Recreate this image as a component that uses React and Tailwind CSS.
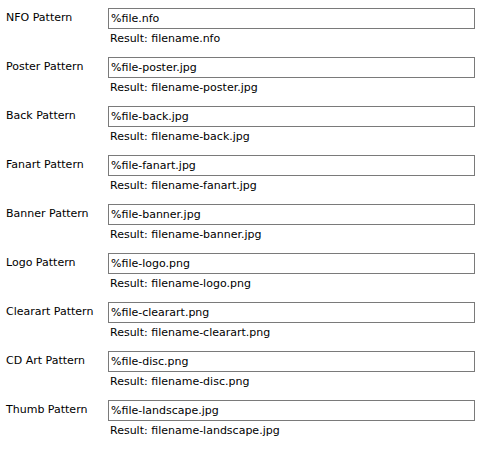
import React from 'react';

const rows = [
  ['NFO Pattern', '%file.nfo', 'filename.nfo'],
  ['Poster Pattern', '%file-poster.jpg', 'filename-poster.jpg'],
  ['Back Pattern', '%file-back.jpg', 'filename-back.jpg'],
  ['Fanart Pattern', '%file-fanart.jpg', 'filename-fanart.jpg'],
  ['Banner Pattern', '%file-banner.jpg', 'filename-banner.jpg'],
  ['Logo Pattern', '%file-logo.png', 'filename-logo.png'],
  ['Clearart Pattern', '%file-clearart.png', 'filename-clearart.png'],
  ['CD Art Pattern', '%file-disc.png', 'filename-disc.png'],
  ['Thumb Pattern', '%file-landscape.jpg', 'filename-landscape.jpg'],
];

export default function App() {
  return (
    <div
      className="w-[491px] h-[454px] bg-white text-black text-[11px] pt-[8px]"
      style={{ fontFamily: '"DejaVu Sans", Verdana, sans-serif' }}
    >
      {rows.map(([label, value, result]) => (
        <div key={label} className="flex h-[49px]">
          <div className="w-[108px] pl-[6px] h-[21px] flex items-center">{label}</div>
          <div className="w-[367px]">
            <input
              type="text"
              defaultValue={value}
              className="block w-full h-[21px] border border-[#7a7a7a] px-[2px] text-[11px] text-black outline-none"
              style={{ fontFamily: '"DejaVu Sans", Verdana, sans-serif' }}
            />
            <div className="mt-[3px] pl-[2px] leading-[13px]">Result: {result}</div>
          </div>
        </div>
      ))}
    </div>
  );
}
